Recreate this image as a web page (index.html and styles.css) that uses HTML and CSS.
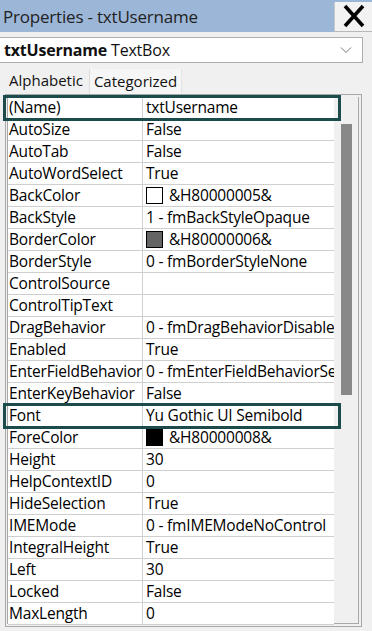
FILE: index.html
```html
<!DOCTYPE html>
<html>
<head>
<meta charset="utf-8">
<link rel="stylesheet" href="styles.css">
</head>
<body>
<div class="window">
  <div class="titlebar">
    <span class="title">Properties - txtUsername</span>
    <div class="close">
      <svg width="24" height="24" viewBox="0 0 24 24"><path d="M3 2 L21 22 M21 2 L3 22" stroke="#000" stroke-width="3.6" fill="none"/></svg>
    </div>
  </div>
  <div class="combo">
    <span class="combo-text"><b>txtUsername</b> TextBox</span>
    <svg class="chev" width="12" height="8" viewBox="0 0 12 8"><path d="M1 1.5 L6 6.5 L11 1.5" stroke="#777" stroke-width="1" fill="none"/></svg>
  </div>
  <div class="tabs">
    <div class="tab active">Alphabetic</div>
    <div class="tab">Categorized</div>
  </div>
  <div class="grid-outer">
    <div class="grid-inner">
      <div class="rows">
        <div class="row hl"><div class="k">(Name)</div><div class="v">txtUsername</div></div>
        <div class="row"><div class="k">AutoSize</div><div class="v">False</div></div>
        <div class="row"><div class="k">AutoTab</div><div class="v">False</div></div>
        <div class="row"><div class="k">AutoWordSelect</div><div class="v">True</div></div>
        <div class="row"><div class="k">BackColor</div><div class="v"><span class="sw sw-white"></span>&amp;H80000005&amp;</div></div>
        <div class="row"><div class="k">BackStyle</div><div class="v">1 - fmBackStyleOpaque</div></div>
        <div class="row"><div class="k">BorderColor</div><div class="v"><span class="sw sw-grey"></span>&amp;H80000006&amp;</div></div>
        <div class="row"><div class="k">BorderStyle</div><div class="v">0 - fmBorderStyleNone</div></div>
        <div class="row"><div class="k">ControlSource</div><div class="v"></div></div>
        <div class="row"><div class="k">ControlTipText</div><div class="v"></div></div>
        <div class="row"><div class="k">DragBehavior</div><div class="v">0 - fmDragBehaviorDisabled</div></div>
        <div class="row"><div class="k">Enabled</div><div class="v">True</div></div>
        <div class="row"><div class="k">EnterFieldBehavior</div><div class="v">0 - fmEnterFieldBehaviorSelectAll</div></div>
        <div class="row"><div class="k">EnterKeyBehavior</div><div class="v">False</div></div>
        <div class="row hl"><div class="k">Font</div><div class="v">Yu Gothic UI Semibold</div></div>
        <div class="row"><div class="k">ForeColor</div><div class="v"><span class="sw sw-black"></span>&amp;H80000008&amp;</div></div>
        <div class="row"><div class="k">Height</div><div class="v">30</div></div>
        <div class="row"><div class="k">HelpContextID</div><div class="v">0</div></div>
        <div class="row"><div class="k">HideSelection</div><div class="v">True</div></div>
        <div class="row"><div class="k">IMEMode</div><div class="v">0 - fmIMEModeNoControl</div></div>
        <div class="row"><div class="k">IntegralHeight</div><div class="v">True</div></div>
        <div class="row"><div class="k">Left</div><div class="v">30</div></div>
        <div class="row"><div class="k">Locked</div><div class="v">False</div></div>
        <div class="row"><div class="k">MaxLength</div><div class="v">0</div></div>
      </div>
      <div class="scroll">
        <div class="thumb"></div>
      </div>
    </div>
  </div>
</div>
</body>
</html>
```
FILE: styles.css
```css
html, body {
  margin: 0;
  padding: 0;
  background: #f0f0f0;
}
.window {
  width: 372px;
  height: 631px;
  overflow: hidden;
  font-family: "Open Sans", "Noto Sans", sans-serif;
  color: #000;
}
.titlebar {
  height: 32px;
  background: #9cb6d7;
  display: flex;
  align-items: center;
  justify-content: space-between;
}
.title {
  font-size: 17px;
  color: #222;
  padding-left: 3px;
  letter-spacing: -0.2px;
}
.close {
  width: 37px;
  height: 29px;
  margin-top: 1px;
  background: #f2f2f2;
  border-left: 1px solid #c8c8c8;
  border-bottom: 1px solid #b8b8b8;
  display: flex;
  align-items: center;
  justify-content: center;
}
.combo {
  margin-top: 5px;
  width: 362px;
  height: 24px;
  background: #fff;
  border: 1px solid #adadad;
  border-left: none;
  display: flex;
  align-items: center;
  justify-content: space-between;
}
.combo-text {
  font-size: 16px;
  padding-left: 4px;
  color: #111;
  letter-spacing: -0.2px;
}
.combo-text b {
  font-weight: 700;
}
.chev {
  margin-right: 10px;
}
.tabs {
  display: flex;
  height: 27px;
  margin-top: 4px;
  padding-left: 3px;
}
.tab {
  font-size: 15px;
  line-height: 26px;
  color: #111;
}
.tab.active {
  padding: 0 6px 0 6px;
  background: #f0f0f0;
}
.tab:not(.active) {
  padding: 0 4px 0 4px;
  background: #f6f6f6;
  border-left: 1px solid #dcdcdc;
  border-right: 1px solid #e4e4e4;
  margin-top: 2px;
  line-height: 25px;
}
.grid-outer {
  margin-left: 5px;
  width: 351px;
  height: 527px;
  border: 1px solid #a8a8a8;
  padding: 2px;
  background: #f0f0f0;
}
.grid-inner {
  height: 527px;
  border-left: 1px solid #a8a8a8;
  border-right: 1px solid #a8a8a8;
  border-bottom: 1px solid #a8a8a8;
  display: flex;
  box-sizing: border-box;
  margin-left: -1px;
}
.rows {
  width: 326px;
  display: flex;
  flex-direction: column;
}
.row {
  display: flex;
  height: 22px;
  box-sizing: border-box;
  border-bottom: 1px solid #cfcfcf;
  background: #fff;
  font-size: 15.5px;
  line-height: 21px;
  position: relative;
}
.k {
  width: 133px;
  padding-left: 1px;
  border-right: 1px solid #cfcfcf;
  white-space: nowrap;
  overflow: hidden;
  letter-spacing: -0.2px;
}
.v {
  flex: 1;
  padding-left: 3px;
  white-space: nowrap;
  overflow: hidden;
  display: flex;
  align-items: center;
  letter-spacing: -0.2px;
}
.row.hl {
  z-index: 3;
}
.row.hl::after {
  content: "";
  position: absolute;
  left: -5px;
  right: -7px;
  top: -2px;
  bottom: -3px;
  border: 3px solid #1c4b4b;
  pointer-events: none;
}
.sw {
  display: inline-block;
  width: 15px;
  height: 15px;
  border: 1px solid #000;
  margin-right: 6px;
  flex: none;
}
.sw-white { background: #fff; }
.sw-grey { background: #646464; }
.sw-black { background: #000; }
.scroll {
  flex: 1;
  background: #f0f0f0;
}
.thumb {
  margin-left: 7px;
  margin-top: 27px;
  width: 11px;
  height: 271px;
  background: #888;
}
```
